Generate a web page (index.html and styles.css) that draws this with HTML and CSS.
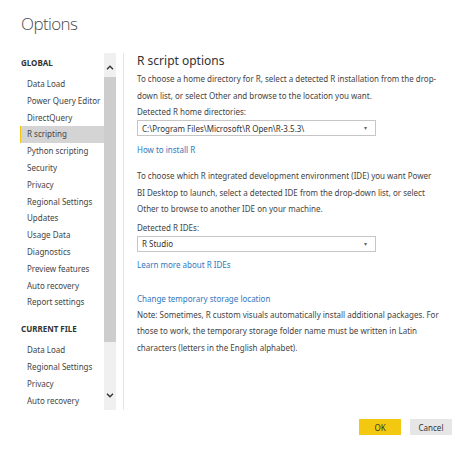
FILE: index.html
```html
<!DOCTYPE html>
<html lang="en">
<head>
  <meta charset="UTF-8">
  <meta name="viewport" content="width=device-width, initial-scale=1.0">
  <title>Options</title>
  <link rel="stylesheet" href="styles.css">
</head>
<body>
  <div class="dialog">
    <h1 class="title">Options</h1>

    <div class="panes">
      <aside class="sidebar">
        <nav class="menu">
          <div class="menu-head">GLOBAL</div>
          <a href="#" class="menu-item">Data Load</a>
          <a href="#" class="menu-item">Power Query Editor</a>
          <a href="#" class="menu-item">DirectQuery</a>
          <a href="#" class="menu-item active">R scripting</a>
          <a href="#" class="menu-item">Python scripting</a>
          <a href="#" class="menu-item">Security</a>
          <a href="#" class="menu-item">Privacy</a>
          <a href="#" class="menu-item">Regional Settings</a>
          <a href="#" class="menu-item">Updates</a>
          <a href="#" class="menu-item">Usage Data</a>
          <a href="#" class="menu-item">Diagnostics</a>
          <a href="#" class="menu-item">Preview features</a>
          <a href="#" class="menu-item">Auto recovery</a>
          <a href="#" class="menu-item">Report settings</a>

          <div class="menu-head second">CURRENT FILE</div>
          <a href="#" class="menu-item">Data Load</a>
          <a href="#" class="menu-item">Regional Settings</a>
          <a href="#" class="menu-item">Privacy</a>
          <a href="#" class="menu-item">Auto recovery</a>
        </nav>

        <div class="scrollbar">
          <div class="scroll-btn up">
            <svg width="8" height="5" viewBox="0 0 8 5"><path d="M1 4.2 L4 1.2 L7 4.2" fill="none" stroke="#333" stroke-width="1.4"/></svg>
          </div>
          <div class="thumb"></div>
          <div class="scroll-btn down">
            <svg width="8" height="5" viewBox="0 0 8 5"><path d="M1 0.8 L4 3.8 L7 0.8" fill="none" stroke="#333" stroke-width="1.4"/></svg>
          </div>
        </div>
      </aside>

      <section class="content">
        <h2 class="heading">R script options</h2>
        <p class="text">To choose a home directory for R, select a detected R installation from the drop-down list, or select Other and browse to the location you want.</p>

        <label class="field-label">Detected R home directories:</label>
        <div class="select">
          <span>C:\Program Files\Microsoft\R Open\R-3.5.3\</span>
          <span class="caret">&#9662;</span>
        </div>
        <a href="#" class="link first-link">How to install R</a>

        <p class="text ide">To choose which R integrated development environment (IDE) you want Power BI Desktop to launch, select a detected IDE from the drop-down list, or select Other to browse to another IDE on your machine.</p>

        <label class="field-label ide-label">Detected R IDEs:</label>
        <div class="select">
          <span>R Studio</span>
          <span class="caret">&#9662;</span>
        </div>
        <a href="#" class="link more-link">Learn more about R IDEs</a>

        <a href="#" class="link storage-link">Change temporary storage location</a>
        <p class="text note">Note: Sometimes, R custom visuals automatically install additional packages. For those to work, the temporary storage folder name must be written in Latin characters (letters in the English alphabet).</p>
      </section>
    </div>

    <footer class="actions">
      <button class="btn ok">OK</button>
      <button class="btn cancel">Cancel</button>
    </footer>
  </div>
</body>
</html>
```

FILE: styles.css
```css
body {
  margin: 0;
  background-color: #fff;
  font-family: 'Noto Sans', 'Open Sans', sans-serif;
  color: #444;
}

.dialog {
  width: 474px;
  height: 456px;
  display: flex;
  flex-direction: column;
}

.title {
  margin: 12px 0 0 21px;
  font-family: 'Open Sans', sans-serif;
  font-weight: 300;
  font-size: 17px;
  letter-spacing: -0.6px;
  line-height: 24px;
  color: #4a4a4a;
}

.panes {
  display: flex;
  margin-top: 17px;
  margin-left: 20px;
  height: 357px;
}

.sidebar {
  display: flex;
  width: 96px;
}

.menu {
  display: flex;
  flex-direction: column;
  width: 84px;
  padding-top: 1px;
}

.menu-head {
  padding-left: 1px;
  font-size: 8px;
  font-weight: bold;
  line-height: 17px;
  color: #333;
  margin-bottom: 5px;
}

.menu-head.second {
  margin-top: 9px;
}

.menu-item {
  display: block;
  padding-left: 6px;
  font-size: 8px;
  line-height: 16.8px;
  color: #444;
  text-decoration: none;
  white-space: nowrap;
  border-left: 1px solid transparent;
}

.menu-item.active {
  background-color: #d4d4d4;
  border-left-color: #f2c811;
}

/* fake scrollbar beside the menu */
.scrollbar {
  width: 12px;
  display: flex;
  flex-direction: column;
  background-color: #f0f0f0;
}

.scroll-btn {
  display: flex;
  justify-content: center;
  height: 24px;
}

.scroll-btn.up {
  align-items: flex-end;
  padding-bottom: 7px;
  height: 17px;
}

.scroll-btn.down {
  margin-top: auto;
  align-items: center;
  height: 30px;
}

.thumb {
  height: 265px;
  background-color: #cdcdcd;
}

.content {
  margin-left: 7px;
  padding-left: 13px;
  border-left: 1px solid #e6e6e6;
  width: 316px;
  display: flex;
  flex-direction: column;
  align-items: flex-start;
}

.heading {
  margin: 0;
  font-size: 12px;
  font-weight: normal;
  line-height: 16px;
  color: #333;
}

.text {
  margin: 2px 0 0;
  font-size: 8px;
  line-height: 16.5px;
  width: 300px;
}

.text.ide {
  margin-top: 10px;
}

.text.note {
  margin-top: 0;
  width: 308px;
}

.field-label {
  font-size: 8px;
  line-height: 16px;
}

.ide-label {
  margin-top: 2px;
}

.select {
  box-sizing: border-box;
  width: 239px;
  height: 16px;
  border: 1px solid #c6c6c6;
  display: flex;
  align-items: center;
  justify-content: space-between;
  padding: 0 8px 0 4px;
  font-size: 8px;
  color: #333;
}

.caret {
  font-size: 6px;
  color: #666;
}

.link {
  font-size: 8px;
  line-height: 16px;
  color: #2f78c0;
  text-decoration: none;
}

.first-link {
  margin-top: 6px;
}

.more-link {
  margin-top: 5px;
}

.storage-link {
  margin-top: 18px;
}

.actions {
  display: flex;
  justify-content: flex-end;
  gap: 9px;
  margin-top: 9px;
  padding-right: 22px;
}

.btn {
  width: 42px;
  height: 16px;
  border: none;
  padding: 0;
  font-family: 'Noto Sans', sans-serif;
  font-size: 8px;
  color: #333;
}

.btn.ok {
  background-color: #f2c811;
}

.btn.cancel {
  background-color: #e6e6e6;
}
```
